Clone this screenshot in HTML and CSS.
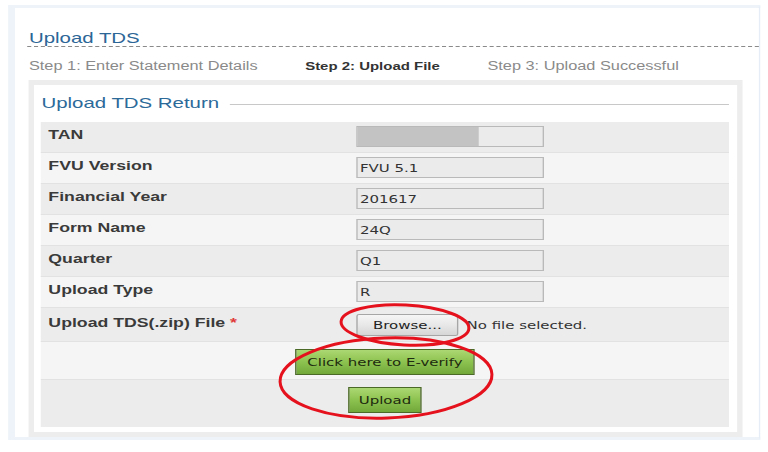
FILE: index.html
```html
<!DOCTYPE html>
<html>
<head>
<meta charset="utf-8">
<title>Upload TDS</title>
<link rel="stylesheet" href="styles.css">
</head>
<body>
<div class="canvas">
  <div class="page">
    <div class="head"><h1 class="title">Upload TDS</h1></div>
    <div class="steps">
      <span class="step">Step 1: Enter Statement Details</span>
      <span class="step current">Step 2: Upload File</span>
      <span class="step">Step 3: Upload Successful</span>
    </div>
    <div class="panel">
      <div class="legend"><span class="legend-text">Upload TDS Return</span><span class="legend-line"></span></div>
      <div class="rows">
        <div class="row dark"><div class="label">TAN</div><div class="value"><div class="field"><span class="mask"></span></div></div></div>
        <div class="row light"><div class="label">FVU Version</div><div class="value"><div class="field">FVU 5.1</div></div></div>
        <div class="row dark"><div class="label">Financial Year</div><div class="value"><div class="field">201617</div></div></div>
        <div class="row light"><div class="label">Form Name</div><div class="value"><div class="field">24Q</div></div></div>
        <div class="row dark"><div class="label">Quarter</div><div class="value"><div class="field">Q1</div></div></div>
        <div class="row light"><div class="label">Upload Type</div><div class="value"><div class="field">R</div></div></div>
        <div class="row dark file-row"><div class="label">Upload TDS(.zip) File <span class="req">*</span></div><div class="value file-value"><button class="browse" type="button">Browse...</button><span class="file-name">No file selected.</span></div></div>
        <div class="row light action-row"><button class="green verify" type="button">Click here to E-verify</button></div>
        <div class="row dark action-row last"><button class="green upload" type="button">Upload</button></div>
      </div>
    </div>
  </div>
</div>
<svg class="marks" width="768" height="452" viewBox="0 0 768 452">
  <ellipse cx="405" cy="325" rx="64" ry="20" transform="rotate(3 405 325)" fill="none" stroke="#e5121d" stroke-width="3"/>
  <ellipse cx="386" cy="378" rx="106" ry="40" transform="rotate(-2 386 378)" fill="none" stroke="#e5121d" stroke-width="3"/>
</svg>
</body>
</html>
```

FILE: styles.css
```css
html, body {
  margin: 0;
  padding: 0;
  background: #ffffff;
  overflow: hidden;
}
body {
  width: 768px;
  height: 452px;
  position: relative;
  font-family: "Liberation Sans", Arial, sans-serif;
}
.canvas {
  width: 564.7px;
  transform: scaleX(1.36);
  transform-origin: 0 0;
}
.page {
  box-sizing: border-box;
  width: 552.9px;
  margin: 5px 0 0 5.9px;
  border-style: solid;
  border-color: #eef3fa;
  border-width: 3px 1px 3px 5px;
  border-right-color: #e6edf6;
}
.head {
  margin-left: 9px;
  padding-top: 21px;
  border-bottom: 1px dashed #8a8a8a;
}
.title {
  margin: 0;
  padding-left: 1.4px;
  font-size: 15px;
  line-height: 17px;
  font-weight: normal;
  color: #2c6697;
}
.steps {
  display: flex;
  gap: 35px;
  padding: 11px 0 0 10.4px;
  font-size: 12px;
  line-height: 16px;
  color: #8a8a8a;
}
.step.current {
  font-weight: bold;
  font-size: 11px;
  color: #333333;
}
.panel {
  box-sizing: border-box;
  width: 525px;
  margin: 6px 0 0 9.7px;
  border-style: solid;
  border-color: #ededed;
  border-width: 5px 4.4px;
  padding: 9px 5.9px 5px;
  background: #ffffff;
}
.legend {
  display: flex;
  align-items: center;
  margin-bottom: 10px;
  height: 18px;
}
.legend-text {
  font-size: 15px;
  line-height: 18px;
  color: #2c6a9a;
  padding-right: 8px;
}
.legend-line {
  flex: 1;
  height: 1px;
  margin-top: 2px;
  background: #c8c8c8;
}
.row {
  display: flex;
  align-items: flex-start;
  padding: 4px 0 5px 5.1px;
  border-bottom: 1px solid #e2e2e2;
}
.row.dark { background: #ececec; }
.row.light { background: #f5f5f5; }
.label {
  flex: none;
  width: 226.5px;
  padding-top: 1px;
  font-size: 13px;
  line-height: 16px;
  font-weight: bold;
  color: #3a3a3a;
}
.req { color: #e03a3a; }
.value { flex: 1; }
.field {
  box-sizing: border-box;
  position: relative;
  width: 138.2px;
  height: 21px;
  padding: 1px 0 0 1.6px;
  border: 1px solid #b9b9b9;
  background: #ebebeb;
  font-family: "DejaVu Sans", Verdana, sans-serif;
  font-size: 11px;
  line-height: 19px;
  color: #333333;
  overflow: hidden;
}
.mask {
  position: absolute;
  left: 0;
  top: 0;
  width: 89px;
  height: 21px;
  background: #c3c3c3;
}
.file-row { padding-top: 6px; }
.file-value {
  display: flex;
  align-items: center;
  gap: 6px;
}
.browse {
  box-sizing: border-box;
  width: 75px;
  height: 22px;
  margin: 0;
  padding: 0;
  border: 1px solid #a6a6a6;
  border-radius: 2px;
  background: linear-gradient(#f6f6f6, #e6e6e6 55%, #d6d6d6);
  font-family: "DejaVu Sans", Verdana, sans-serif;
  font-size: 11px;
  color: #222222;
}
.file-name {
  font-family: "DejaVu Sans", Verdana, sans-serif;
  font-size: 11px;
  color: #333333;
}
.action-row {
  justify-content: center;
  padding: 7px 0 4px 0;
}
.action-row.last {
  padding-bottom: 14px;
  border-bottom: none;
}
.green {
  box-sizing: border-box;
  height: 26px;
  margin: 0;
  padding: 0;
  border: 1px solid #4b6a27;
  background: linear-gradient(#acd873, #8cc24f 50%, #72a83a);
  font-family: "DejaVu Sans", Verdana, sans-serif;
  font-size: 11px;
  color: #1e2b10;
}
.verify { width: 131.6px; }
.upload { width: 54px; }
.marks {
  position: absolute;
  left: 0;
  top: 0;
  pointer-events: none;
}
```
